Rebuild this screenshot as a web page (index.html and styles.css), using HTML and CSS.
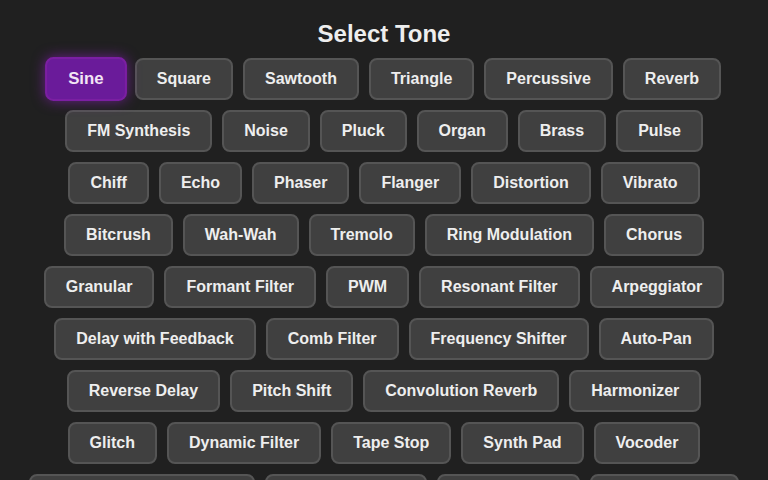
FILE: index.html
```html
<!DOCTYPE html>
<html lang="en">
<head>
  <meta charset="UTF-8" />
  <meta name="viewport" content="width=device-width, initial-scale=1.0" />
  <title>Select Tone</title>
  <link rel="stylesheet" href="styles.css">
</head>
<body>
  <h2>Select Tone</h2>

  <div id="tones" class="tone-list">
    <button class="tone-btn selected">Sine</button>
    <button class="tone-btn">Square</button>
    <button class="tone-btn">Sawtooth</button>
    <button class="tone-btn">Triangle</button>
    <button class="tone-btn">Percussive</button>
    <button class="tone-btn">Reverb</button>
    <button class="tone-btn">FM Synthesis</button>
    <button class="tone-btn">Noise</button>
    <button class="tone-btn">Pluck</button>
    <button class="tone-btn">Organ</button>
    <button class="tone-btn">Brass</button>
    <button class="tone-btn">Pulse</button>
    <button class="tone-btn">Chiff</button>
    <button class="tone-btn">Echo</button>
    <button class="tone-btn">Phaser</button>
    <button class="tone-btn">Flanger</button>
    <button class="tone-btn">Distortion</button>
    <button class="tone-btn">Vibrato</button>
    <button class="tone-btn">Bitcrush</button>
    <button class="tone-btn">Wah-Wah</button>
    <button class="tone-btn">Tremolo</button>
    <button class="tone-btn">Ring Modulation</button>
    <button class="tone-btn">Chorus</button>
    <button class="tone-btn">Granular</button>
    <button class="tone-btn">Formant Filter</button>
    <button class="tone-btn">PWM</button>
    <button class="tone-btn">Resonant Filter</button>
    <button class="tone-btn">Arpeggiator</button>
    <button class="tone-btn">Delay with Feedback</button>
    <button class="tone-btn">Comb Filter</button>
    <button class="tone-btn">Frequency Shifter</button>
    <button class="tone-btn">Auto-Pan</button>
    <button class="tone-btn">Reverse Delay</button>
    <button class="tone-btn">Pitch Shift</button>
    <button class="tone-btn">Convolution Reverb</button>
    <button class="tone-btn">Harmonizer</button>
    <button class="tone-btn">Glitch</button>
    <button class="tone-btn">Dynamic Filter</button>
    <button class="tone-btn">Tape Stop</button>
    <button class="tone-btn">Synth Pad</button>
    <button class="tone-btn">Vocoder</button>
    <button class="tone-btn">Sidechain Compression</button>
    <button class="tone-btn">Stereo Widener</button>
    <button class="tone-btn">Soft Clipping</button>
    <button class="tone-btn">Lo-Fi Crusher</button>
  </div>

  <script>
    const toneButtons = document.querySelectorAll('.tone-btn');

    toneButtons.forEach(button => {
      button.addEventListener('click', () => {
        toneButtons.forEach(b => b.classList.remove('selected'));
        button.classList.add('selected');
      });
    });
  </script>
</body>
</html>
```

FILE: styles.css
```css
body {
  margin: 0;
  padding: 20px;
  font-family: "Liberation Sans", Arial, sans-serif;
  text-align: center;
  background-color: #202020;
  color: #eeeeee;
}

h2 {
  margin: 0 0 5px;
  font-size: 24px;
  line-height: 28px;
  font-weight: bold;
}

.tone-list {
  display: flex;
  flex-wrap: wrap;
  justify-content: center;
}

.tone-btn {
  margin: 5px;
  padding: 10px 20px;
  font-family: inherit;
  font-size: 16px;
  font-weight: bold;
  line-height: 18px;
  color: #eeeeee;
  background-color: #404040;
  border: 2px solid #555555;
  border-radius: 8px;
  cursor: pointer;
}

.tone-btn:hover {
  background-color: #4a4a4a;
}

.tone-btn.selected {
  background-color: #6a1b9a;
  border-color: #7b1fa2;
  color: #f3e5f5;
  transform: scale(1.05);
  box-shadow: 0 0 12px rgba(123, 31, 162, 0.8);
}
```
